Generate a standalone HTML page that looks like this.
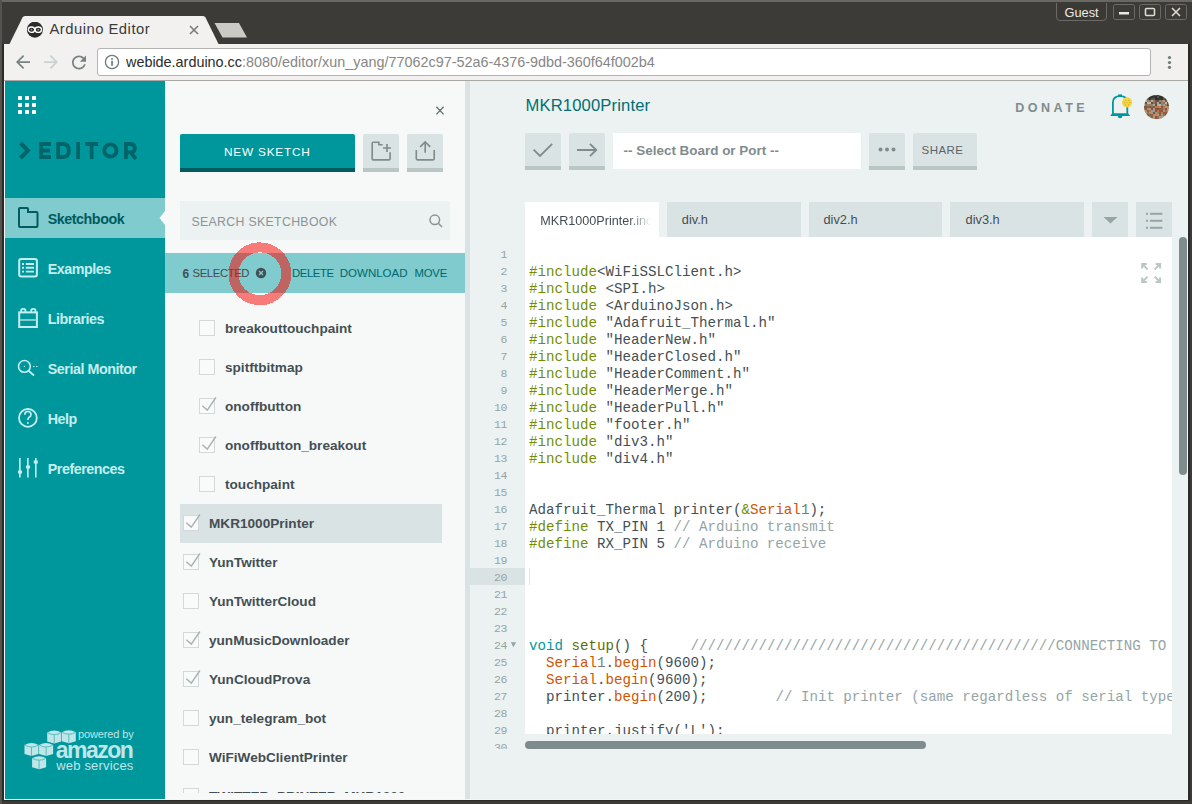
<!DOCTYPE html>
<html><head><meta charset="utf-8">
<style>
*{margin:0;padding:0;box-sizing:border-box}
html,body{width:1192px;height:804px;overflow:hidden;background:#3c3b37;font-family:"Liberation Sans",sans-serif}
.a{position:absolute}
.t{position:absolute;line-height:1;white-space:nowrap}
.code{position:absolute;left:4px;height:17px;line-height:17px;font-family:"Liberation Mono",monospace;font-size:14.17px;white-space:pre;color:#434f54}
.ln{position:absolute;right:18px;height:17px;line-height:17px;font-family:"Liberation Mono",monospace;font-size:11.5px;color:#95a5a6;text-align:right;letter-spacing:-0.4px}
</style></head><body>
<div class="a" style="left:0px;top:0px;width:1192px;height:804px;background:#3c3b37;"></div>
<div class="a" style="left:0px;top:0px;width:1192px;height:2px;background:#696864;"></div>
<div class="a" style="left:0px;top:0px;width:2px;height:804px;background:#55534f;"></div>
<div class="a" style="left:2px;top:44px;width:2px;height:757px;background:#2b2a27;"></div>
<div class="a" style="left:1188px;top:44px;width:1.5px;height:757px;background:#2b2a27;"></div>
<div class="a" style="left:4px;top:800px;width:1185px;height:1px;background:#2b2a27;"></div>
<svg class="a" style="left:0;top:0" width="260" height="45">
<path d="M9,45 L22.5,17.5 Q23.3,16 25,16 L203,16 Q204.7,16 205.5,17.5 L219,45 Z" fill="#f2f1f0"/>
<path d="M214.5,23 L239,23 L247,37.5 L222.5,37.5 Z" fill="#cbcac6"/>
</svg>
<svg class="a" style="left:27px;top:22px" width="16" height="16" viewBox="0 0 16 16">
<circle cx="7.9" cy="7.7" r="8" fill="#2b2b2a"/>
<ellipse cx="4.5" cy="7.7" rx="3.2" ry="2.7" fill="none" stroke="#fff" stroke-width="1.3"/>
<ellipse cx="11.3" cy="7.7" rx="3.2" ry="2.7" fill="none" stroke="#fff" stroke-width="1.3"/>
<circle cx="4.5" cy="7.7" r="0.9" fill="#8a9a9a"/><circle cx="11.3" cy="7.7" r="0.9" fill="#8a9a9a"/>
</svg>
<div class="t" style="left:49.4px;top:22.27px;font-size:14.8px;color:#3b3b3b;font-weight:normal;letter-spacing:0.5px;font-family:'Liberation Sans',sans-serif;">Arduino Editor</div>
<svg class="a" style="left:189px;top:25px" width="10" height="10"><path d="M1,1 L9,9 M9,1 L1,9" stroke="#7a7a78" stroke-width="1.6"/></svg>
<svg class="a" style="left:1050px;top:0" width="142" height="24">
<path d="M6.5,3 L6.5,17 Q6.5,20.5 10,20.5 L53,20.5 Q56.5,20.5 56.5,17 L56.5,3" fill="#3a3935" stroke="#6b6a66" stroke-width="1"/>
<rect x="63.5" y="4.5" width="21" height="15" rx="2" fill="none" stroke="#6b6a66"/>
<rect x="89.5" y="4.5" width="21" height="15" rx="2" fill="none" stroke="#6b6a66"/>
<rect x="115.5" y="4.5" width="21" height="15" rx="2" fill="none" stroke="#6b6a66"/>
<rect x="69" y="12" width="10" height="2.5" fill="#e8e8e6"/>
<rect x="95.5" y="8.5" width="9" height="7" rx="1" fill="none" stroke="#dfdbd2" stroke-width="1.6"/>
<path d="M122,8 L130,16 M130,8 L122,16" stroke="#dfdbd2" stroke-width="1.6"/>
</svg>
<div class="t" style="left:1064.5px;top:6.66px;font-size:12.8px;color:#ecebe8;font-weight:normal;letter-spacing:0px;font-family:'Liberation Sans',sans-serif;">Guest</div>
<div class="a" style="left:4px;top:44px;width:1184px;height:37px;background:#f2f1f0;"></div>
<div class="a" style="left:4px;top:80px;width:1184px;height:1px;background:#a9a8a5;"></div>
<svg class="a" style="left:0;top:44px" width="100" height="36">
<g transform="translate(12.5,7.5) scale(0.875)"><path d="M20 11H7.83l5.59-5.59L12 4l-8 8 8 8 1.41-1.41L7.83 13H20v-2z" fill="#778383"/></g>
<g transform="translate(40.5,7.5) scale(0.875)"><path d="M4 11h12.17l-5.59-5.59L12 4l8 8-8 8-1.41-1.41L16.17 13H4v-2z" fill="#c9d1d1"/></g>
<g transform="translate(68.5,8) scale(0.875)"><path d="M17.65 6.35C16.2 4.9 14.21 4 12 4c-4.42 0-7.99 3.58-7.99 8s3.57 8 7.99 8c3.73 0 6.84-2.55 7.73-6h-2.08c-.82 2.33-3.04 4-5.65 4-3.31 0-6-2.69-6-6s2.69-6 6-6c1.66 0 3.14.69 4.22 1.78L13 11h7V4l-2.35 2.35z" fill="#778383"/></g>
</svg>
<div class="a" style="left:97px;top:48px;width:1054px;height:28px;background:#fff;border:1px solid #b3b3b1;border-radius:3px"></div>
<svg class="a" style="left:104px;top:54px" width="16" height="16"><circle cx="8" cy="8" r="6.6" fill="none" stroke="#6f7a7a" stroke-width="1.3"/><rect x="7.2" y="6.8" width="1.7" height="5" fill="#6f7a7a"/><rect x="7.2" y="4" width="1.7" height="1.7" fill="#6f7a7a"/></svg>
<div class="t" style="left:126.0px;top:55.01px;font-size:14.4px;color:#868686;font-weight:normal;letter-spacing:0px;font-family:'Liberation Sans',sans-serif;"><span style="color:#2b2b2b">webide.arduino.cc</span>:8080/editor/xun_yang/77062c97-52a6-4376-9dbd-360f64f002b4</div>
<svg class="a" style="left:1166px;top:55px" width="8" height="16"><circle cx="3.5" cy="2.5" r="1.6" fill="#6f7a7a"/><circle cx="3.5" cy="7.5" r="1.6" fill="#6f7a7a"/><circle cx="3.5" cy="12.3" r="1.6" fill="#6f7a7a"/></svg>
<div class="a" style="left:4px;top:81px;width:1184px;height:719px;background:#f4f5f5;"></div>
<div class="a" style="left:5px;top:81px;width:1182px;height:718px;background:#ecf1f1;"></div>
<div class="a" style="left:5px;top:81px;width:160px;height:718px;background:#00979c;"></div>
<svg class="a" style="left:18px;top:96px" width="18" height="18"><rect x="0" y="0" width="4" height="4" rx="0.8" fill="#fff"/><rect x="0" y="7" width="4" height="4" rx="0.8" fill="#fff"/><rect x="0" y="14" width="4" height="4" rx="0.8" fill="#fff"/><rect x="7" y="0" width="4" height="4" rx="0.8" fill="#fff"/><rect x="7" y="7" width="4" height="4" rx="0.8" fill="#fff"/><rect x="7" y="14" width="4" height="4" rx="0.8" fill="#fff"/><rect x="14" y="0" width="4" height="4" rx="0.8" fill="#fff"/><rect x="14" y="7" width="4" height="4" rx="0.8" fill="#fff"/><rect x="14" y="14" width="4" height="4" rx="0.8" fill="#fff"/></svg>
<svg class="a" style="left:15px;top:138px" width="130" height="25" fill="none" stroke="#006468" stroke-width="3.8">
<path d="M5.5,5 L12.8,12.5 L5.5,20" stroke-width="4"/>
<path d="M35.9,6 L26.1,6 L26.1,19 L35.9,19 M26.1,12.5 L35,12.5"/>
<path d="M43.2,6 L48,6 Q53.8,6 53.8,12.5 Q53.8,19 48,19 L43.2,19 Z"/>
<path d="M63.1,4 L63.1,21"/>
<path d="M70.2,6 L83.1,6 M76.65,6 L76.65,21"/>
<circle cx="95.4" cy="12.5" r="6.2"/>
<path d="M110.9,21 L110.9,6 L115.5,6 Q119.8,6 119.8,10.2 Q119.8,14.4 115.5,14.4 L110.9,14.4 M115.5,14.4 L121,21"/>
</svg>
<div class="a" style="left:5px;top:198px;width:160px;height:40px;background:#7fcbcd;"></div>
<svg class="a" style="left:159px;top:211px" width="6" height="14"><path d="M6,0 L0.5,7 L6,14 Z" fill="#f7f9f9"/></svg>
<svg class="a" style="left:15px;top:200px" width="30" height="290" fill="none" stroke-width="2">
<path d="M4,9 L4,26 Q4,27 5,27 L21.5,27 Q22.5,27 22.5,26 L22.5,13 Q22.5,12 21.5,12 L13,12 L13,9 Q13,8 12,8 L5,8 Q4,8 4,9 Z" stroke="#005c5f"/>
<rect x="4.2" y="58.9" width="17.7" height="17.6" rx="2" stroke="#c5eeef"/>
<path d="M7,64 L9,64 M7,67.8 L9,67.8 M7,71.6 L9,71.6 M10.8,64 L19,64 M10.8,67.8 L19,67.8 M10.8,71.6 L19,71.6" stroke="#c5eeef" stroke-width="1.9"/>
<rect x="4.2" y="112.4" width="17.7" height="14.6" stroke="#c5eeef"/>
<path d="M6.2,112.4 L6.2,110.4 Q6.2,108.9 8.3,108.9 Q10.4,108.9 10.4,110.4 L10.4,112.4 M16.2,112.4 L16.2,110.4 Q16.2,108.9 18.3,108.9 Q20.4,108.9 20.4,110.4 L20.4,112.4" stroke="#c5eeef" stroke-width="1.8"/>
<path d="M5,120 L21.5,120" stroke="#8fd3d4" stroke-width="1.8"/>
<circle cx="9.4" cy="166.4" r="5.9" stroke="#c5eeef" stroke-width="1.6"/>
<path d="M13.6,170.8 L19,175.5" stroke="#c5eeef" stroke-width="1.8"/>
<circle cx="9.4" cy="166.4" r="0.6" fill="#c5eeef" stroke="none"/>
<path d="M18,166.5 L19.5,166.5 M21,166.5 L22.5,166.5" stroke="#c5eeef" stroke-width="1.2"/>
<circle cx="12.9" cy="217.9" r="8.9" stroke="#c5eeef" stroke-width="1.8"/>
<path d="M9.8,214.8 Q9.8,211.5 12.9,211.5 Q16,211.5 16,214.5 Q16,216.5 13.8,217.6 Q12.9,218.2 12.9,220" stroke="#c5eeef" stroke-width="1.7"/>
<circle cx="12.9" cy="223" r="1" fill="#c5eeef" stroke="none"/>
<path d="M4.9,258 L4.9,277.5 M12.9,258 L12.9,277.5 M20.8,258 L20.8,277.5" stroke="#c5eeef" stroke-width="1.6"/>
<rect x="3" y="270.5" width="4" height="3" fill="#c5eeef" stroke="none"/>
<rect x="11" y="265.5" width="4" height="3" fill="#c5eeef" stroke="none"/>
<rect x="18.8" y="260.5" width="4" height="3" fill="#c5eeef" stroke="none"/>
</svg>
<div class="t" style="left:47.7px;top:211.90px;font-size:14.3px;color:#005c5f;font-weight:bold;letter-spacing:-0.45px;font-family:'Liberation Sans',sans-serif;">Sketchbook</div>
<div class="t" style="left:47.7px;top:261.90px;font-size:14.3px;color:#c5eeef;font-weight:bold;letter-spacing:-0.45px;font-family:'Liberation Sans',sans-serif;">Examples</div>
<div class="t" style="left:47.7px;top:311.90px;font-size:14.3px;color:#c5eeef;font-weight:bold;letter-spacing:-0.45px;font-family:'Liberation Sans',sans-serif;">Libraries</div>
<div class="t" style="left:47.7px;top:361.90px;font-size:14.3px;color:#c5eeef;font-weight:bold;letter-spacing:-0.45px;font-family:'Liberation Sans',sans-serif;">Serial Monitor</div>
<div class="t" style="left:47.7px;top:411.90px;font-size:14.3px;color:#c5eeef;font-weight:bold;letter-spacing:-0.45px;font-family:'Liberation Sans',sans-serif;">Help</div>
<div class="t" style="left:47.7px;top:461.90px;font-size:14.3px;color:#c5eeef;font-weight:bold;letter-spacing:-0.45px;font-family:'Liberation Sans',sans-serif;">Preferences</div>
<svg class="a" style="left:0;top:700px" width="160" height="100"><path d="M47.2,32.6 Q54.2,28.6 61.2,32.6 L61.2,41.6 L54.2,43.6 L47.2,41.6 Z" fill="#bfe6e8"/><path d="M47.7,32.800000000000004 Q50.2,34.6 54.2,34.6 Q58.2,34.6 60.7,32.800000000000004 M54.2,34.6 L54.2,43.6" fill="none" stroke="#5bbcc0" stroke-width="1"/><path d="M61.8,32.2 Q68.8,28.2 75.8,32.2 L75.8,41.2 L68.8,43.2 L61.8,41.2 Z" fill="#bfe6e8"/><path d="M62.3,32.4 Q64.8,34.2 68.8,34.2 Q72.8,34.2 75.3,32.4 M68.8,34.2 L68.8,43.2" fill="none" stroke="#5bbcc0" stroke-width="1"/><path d="M24.5,45 Q31.5,41 38.5,45 L38.5,54 L31.5,56 L24.5,54 Z" fill="#bfe6e8"/><path d="M25.0,45.2 Q27.5,47 31.5,47 Q35.5,47 38.0,45.2 M31.5,47 L31.5,56" fill="none" stroke="#5bbcc0" stroke-width="1"/><path d="M39.1,45 Q46.1,41 53.1,45 L53.1,54 L46.1,56 L39.1,54 Z" fill="#bfe6e8"/><path d="M39.6,45.2 Q42.1,47 46.1,47 Q50.1,47 52.6,45.2 M46.1,47 L46.1,56" fill="none" stroke="#5bbcc0" stroke-width="1"/><path d="M32.1,58.2 Q39.1,54.2 46.1,58.2 L46.1,67.2 L39.1,69.2 L32.1,67.2 Z" fill="#bfe6e8"/><path d="M32.6,58.400000000000006 Q35.1,60.2 39.1,60.2 Q43.1,60.2 45.6,58.400000000000006 M39.1,60.2 L39.1,69.2" fill="none" stroke="#5bbcc0" stroke-width="1"/></svg>
<div class="t" style="left:77.9px;top:729.29px;font-size:11px;color:#bfe6e8;font-weight:normal;letter-spacing:-0.11px;font-family:'Liberation Sans',sans-serif;">powered by</div>
<div class="t" style="left:55.8px;top:739.33px;font-size:23px;color:#bfe6e8;font-weight:bold;letter-spacing:-1.53px;font-family:'Liberation Sans',sans-serif;">amazon</div>
<div class="t" style="left:56.3px;top:758.80px;font-size:13px;color:#bfe6e8;font-weight:normal;letter-spacing:0.17px;font-family:'Liberation Sans',sans-serif;">web services</div>
<div class="a" style="left:165px;top:81px;width:300px;height:718px;background:#f7f9f9;"></div>
<div class="a" style="left:465px;top:81px;width:5px;height:718px;background:#dae3e3;"></div>
<svg class="a" style="left:434px;top:105px" width="12" height="12"><path d="M2.4,1.8 L9.6,9.4 M9.6,1.8 L2.4,9.4" stroke="#5c6b6b" stroke-width="1.25"/></svg>
<div class="a" style="left:180px;top:134px;width:175px;height:38px;background:#00979c;border-bottom:4px solid #005c5f;border-radius:2px 2px 0 0"></div>
<div class="t" style="left:224.0px;top:146.51px;font-size:11.8px;color:#fff;font-weight:normal;letter-spacing:0.8px;font-family:'Liberation Sans',sans-serif;">NEW SKETCH</div>
<div class="a" style="left:363px;top:134px;width:36px;height:38px;background:#dae3e3;border-bottom:4px solid #bac6c3;border-radius:2px 2px 0 0"></div>
<div class="a" style="left:407px;top:134px;width:36px;height:38px;background:#dae3e3;border-bottom:4px solid #bac6c3;border-radius:2px 2px 0 0"></div>
<svg class="a" style="left:363px;top:134px" width="80" height="34" fill="none" stroke="#7f8c8d" stroke-width="2">
<path d="M9.2,25.8 L9.2,9.2 Q9.2,8.2 10.2,8.2 L15.9,8.2 L15.9,10.7 L19.7,10.7" stroke-width="1.65"/>
<path d="M27.1,18.3 L27.1,24.8 Q27.1,25.8 26.1,25.8 L9.2,25.8" stroke-width="1.65"/>
<path d="M20,14 L28,14 M24,10 L24,18" stroke-width="1.65"/>
<path d="M53.3,16 L53.3,24.8 Q53.3,25.8 54.3,25.8 L70.2,25.8 Q71.2,25.8 71.2,24.8 L71.2,16" stroke-width="1.65"/>
<path d="M62.2,18.7 L62.2,8 M57.2,12.8 L62.2,7.8 L67.2,12.8" stroke-width="1.65"/>
</svg>
<div class="a" style="left:180px;top:201px;width:270px;height:39px;background:#ecf1f1;"></div>
<div class="t" style="left:191.4px;top:215.89px;font-size:12.3px;color:#8a9496;font-weight:normal;letter-spacing:0.34px;font-family:'Liberation Sans',sans-serif;">SEARCH SKETCHBOOK</div>
<svg class="a" style="left:428px;top:213px" width="16" height="16" fill="none" stroke="#8a9496" stroke-width="1.5"><circle cx="6.8" cy="6.8" r="4.8"/><path d="M10.3,10.3 L14,14"/></svg>
<div class="a" style="left:165px;top:253px;width:300px;height:40px;background:#7fcbcd;"></div>
<div class="t" style="left:182.4px;top:267.84px;font-size:12px;color:#434f54;font-weight:bold;letter-spacing:0px;font-family:'Liberation Sans',sans-serif;">6</div>
<div class="t" style="left:192.6px;top:268.43px;font-size:11.3px;color:#434f54;font-weight:normal;letter-spacing:-0.4px;font-family:'Liberation Sans',sans-serif;">SELECTED</div>
<svg class="a" style="left:255px;top:267px" width="12" height="12"><circle cx="6" cy="6" r="5.2" fill="#434f54"/><path d="M4,4 L8,8 M8,4 L4,8" stroke="#7fcbcd" stroke-width="1.3"/></svg>
<div class="t" style="left:292.0px;top:268.43px;font-size:11.3px;color:#00686c;font-weight:normal;letter-spacing:-0.4px;font-family:'Liberation Sans',sans-serif;">DELETE</div>
<div class="t" style="left:339.8px;top:268.27px;font-size:11.5px;color:#00686c;font-weight:normal;letter-spacing:0px;font-family:'Liberation Sans',sans-serif;">DOWNLOAD</div>
<div class="t" style="left:414.5px;top:268.43px;font-size:11.3px;color:#00686c;font-weight:normal;letter-spacing:-0.2px;font-family:'Liberation Sans',sans-serif;">MOVE</div>
<div class="a" style="left:165px;top:300px;width:300px;height:493px;overflow:hidden">
<div class="a" style="left:15px;top:204px;width:262px;height:39px;background:#dae3e3;"></div>
<div class="a" style="left:34.3px;top:20.2px;width:15.5px;height:15.5px;border:1.3px solid #d3d9d9;background:#f9fbfb"></div>
<div class="t" style="left:60.0px;top:21.99px;font-size:13.6px;color:#434f54;font-weight:bold;letter-spacing:0px;font-family:'Liberation Sans',sans-serif;">breakouttouchpaint</div>
<div class="a" style="left:34.3px;top:59.2px;width:15.5px;height:15.5px;border:1.3px solid #d3d9d9;background:#f9fbfb"></div>
<div class="t" style="left:60.0px;top:60.99px;font-size:13.6px;color:#434f54;font-weight:bold;letter-spacing:0px;font-family:'Liberation Sans',sans-serif;">spitftbitmap</div>
<div class="a" style="left:34.3px;top:98.2px;width:15.5px;height:15.5px;border:1.3px solid #d3d9d9;background:#f9fbfb"></div>
<svg class="a" style="left:35px;top:94px" width="18" height="20"><path d="M2.3,11.7 L7.3,16.1 L15.9,3.5" fill="none" stroke="#a9b3b3" stroke-width="1.4"/></svg>
<div class="t" style="left:60.0px;top:99.99px;font-size:13.6px;color:#434f54;font-weight:bold;letter-spacing:0px;font-family:'Liberation Sans',sans-serif;">onoffbutton</div>
<div class="a" style="left:34.3px;top:137.2px;width:15.5px;height:15.5px;border:1.3px solid #d3d9d9;background:#f9fbfb"></div>
<svg class="a" style="left:35px;top:133px" width="18" height="20"><path d="M2.3,11.7 L7.3,16.1 L15.9,3.5" fill="none" stroke="#a9b3b3" stroke-width="1.4"/></svg>
<div class="t" style="left:60.0px;top:138.99px;font-size:13.6px;color:#434f54;font-weight:bold;letter-spacing:0px;font-family:'Liberation Sans',sans-serif;">onoffbutton_breakout</div>
<div class="a" style="left:34.3px;top:176.2px;width:15.5px;height:15.5px;border:1.3px solid #d3d9d9;background:#f9fbfb"></div>
<div class="t" style="left:60.0px;top:177.99px;font-size:13.6px;color:#434f54;font-weight:bold;letter-spacing:0px;font-family:'Liberation Sans',sans-serif;">touchpaint</div>
<div class="a" style="left:18.3px;top:215.2px;width:15.5px;height:15.5px;border:1.3px solid #d3d9d9;background:#f9fbfb"></div>
<svg class="a" style="left:19px;top:211px" width="18" height="20"><path d="M2.3,11.7 L7.3,16.1 L15.9,3.5" fill="none" stroke="#a9b3b3" stroke-width="1.4"/></svg>
<div class="t" style="left:44.0px;top:216.99px;font-size:13.6px;color:#434f54;font-weight:bold;letter-spacing:0px;font-family:'Liberation Sans',sans-serif;">MKR1000Printer</div>
<div class="a" style="left:18.3px;top:254.2px;width:15.5px;height:15.5px;border:1.3px solid #d3d9d9;background:#f9fbfb"></div>
<svg class="a" style="left:19px;top:250px" width="18" height="20"><path d="M2.3,11.7 L7.3,16.1 L15.9,3.5" fill="none" stroke="#a9b3b3" stroke-width="1.4"/></svg>
<div class="t" style="left:44.0px;top:255.99px;font-size:13.6px;color:#434f54;font-weight:bold;letter-spacing:0px;font-family:'Liberation Sans',sans-serif;">YunTwitter</div>
<div class="a" style="left:18.3px;top:293.2px;width:15.5px;height:15.5px;border:1.3px solid #d3d9d9;background:#f9fbfb"></div>
<div class="t" style="left:44.0px;top:294.99px;font-size:13.6px;color:#434f54;font-weight:bold;letter-spacing:0px;font-family:'Liberation Sans',sans-serif;">YunTwitterCloud</div>
<div class="a" style="left:18.3px;top:332.2px;width:15.5px;height:15.5px;border:1.3px solid #d3d9d9;background:#f9fbfb"></div>
<svg class="a" style="left:19px;top:328px" width="18" height="20"><path d="M2.3,11.7 L7.3,16.1 L15.9,3.5" fill="none" stroke="#a9b3b3" stroke-width="1.4"/></svg>
<div class="t" style="left:44.0px;top:333.99px;font-size:13.6px;color:#434f54;font-weight:bold;letter-spacing:0px;font-family:'Liberation Sans',sans-serif;">yunMusicDownloader</div>
<div class="a" style="left:18.3px;top:371.2px;width:15.5px;height:15.5px;border:1.3px solid #d3d9d9;background:#f9fbfb"></div>
<svg class="a" style="left:19px;top:367px" width="18" height="20"><path d="M2.3,11.7 L7.3,16.1 L15.9,3.5" fill="none" stroke="#a9b3b3" stroke-width="1.4"/></svg>
<div class="t" style="left:44.0px;top:372.99px;font-size:13.6px;color:#434f54;font-weight:bold;letter-spacing:0px;font-family:'Liberation Sans',sans-serif;">YunCloudProva</div>
<div class="a" style="left:18.3px;top:410.2px;width:15.5px;height:15.5px;border:1.3px solid #d3d9d9;background:#f9fbfb"></div>
<div class="t" style="left:44.0px;top:411.99px;font-size:13.6px;color:#434f54;font-weight:bold;letter-spacing:0px;font-family:'Liberation Sans',sans-serif;">yun_telegram_bot</div>
<div class="a" style="left:18.3px;top:449.2px;width:15.5px;height:15.5px;border:1.3px solid #d3d9d9;background:#f9fbfb"></div>
<div class="t" style="left:44.0px;top:450.99px;font-size:13.6px;color:#434f54;font-weight:bold;letter-spacing:0px;font-family:'Liberation Sans',sans-serif;">WiFiWebClientPrinter</div>
<div class="a" style="left:18.3px;top:488.2px;width:15.5px;height:15.5px;border:1.3px solid #d3d9d9;background:#f9fbfb"></div>
<div class="t" style="left:44.0px;top:489.99px;font-size:13.6px;color:#434f54;font-weight:bold;letter-spacing:0px;font-family:'Liberation Sans',sans-serif;">TWITTER_PRINTER_MKR1000</div>
</div>
<svg class="a" style="left:220px;top:234px" width="80" height="80"><circle cx="39.9" cy="39.8" r="26.4" fill="none" stroke="rgba(248,8,4,0.52)" stroke-width="10" shape-rendering="crispEdges"/></svg>
<div class="t" style="left:525.5px;top:98.15px;font-size:16.6px;color:#006f72;font-weight:normal;letter-spacing:0.15px;font-family:'Liberation Sans',sans-serif;">MKR1000Printer</div>
<div class="t" style="left:1015.3px;top:102.02px;font-size:12.5px;color:#7f8c8d;font-weight:bold;letter-spacing:3.49px;font-family:'Liberation Sans',sans-serif;">DONATE</div>
<svg class="a" style="left:1106px;top:88px" width="30" height="32">
<path d="M6.9,25.8 L6.9,14.5 Q6.9,8.1 14.1,8.1 Q21.3,8.1 21.3,14.5 L21.3,25.8" fill="none" stroke="#00979c" stroke-width="1.8"/>
<rect x="12.2" y="6.4" width="3.8" height="2.4" fill="#00979c"/>
<path d="M4.2,28.1 L6.2,25.2 L22,25.2 L24.2,28.1 Z" fill="#00979c"/>
<path d="M11.8,28 A2.3,2.3 0 0,0 16.4,28 Z" fill="#00979c"/>
<circle cx="21.1" cy="14.3" r="5.1" fill="#f5d442"/>
<g fill="#c9a92a"><circle cx="19.6" cy="12.3" r="0.6"/><circle cx="22.6" cy="12.3" r="0.6"/><circle cx="18.4" cy="14.6" r="0.6"/><circle cx="21.1" cy="14.6" r="0.6"/><circle cx="23.8" cy="14.6" r="0.6"/><circle cx="19.6" cy="16.8" r="0.6"/><circle cx="22.6" cy="16.8" r="0.6"/></g>
</svg>
<div class="a" style="left:1144px;top:94.7px;width:24.8px;height:24.8px;border-radius:50%;overflow:hidden"><svg style="position:absolute;left:-1px;top:-1px" width="27" height="27"><rect x="0" y="0" width="2" height="2" fill="#4a4642"/><rect x="2" y="0" width="2" height="2" fill="#3a3835"/><rect x="4" y="0" width="2" height="2" fill="#2f2e2c"/><rect x="6" y="0" width="2" height="2" fill="#8a8478"/><rect x="8" y="0" width="2" height="2" fill="#2f2e2c"/><rect x="10" y="0" width="2" height="2" fill="#2f2e2c"/><rect x="12" y="0" width="2" height="2" fill="#5a5650"/><rect x="14" y="0" width="2" height="2" fill="#2f2e2c"/><rect x="16" y="0" width="2" height="2" fill="#4a4642"/><rect x="18" y="0" width="2" height="2" fill="#5a5650"/><rect x="20" y="0" width="2" height="2" fill="#2f2e2c"/><rect x="22" y="0" width="2" height="2" fill="#5a5650"/><rect x="24" y="0" width="2" height="2" fill="#3a3835"/><rect x="0" y="2" width="2" height="2" fill="#2f2e2c"/><rect x="2" y="2" width="2" height="2" fill="#2f2e2c"/><rect x="4" y="2" width="2" height="2" fill="#2f2e2c"/><rect x="6" y="2" width="2" height="2" fill="#2f2e2c"/><rect x="8" y="2" width="2" height="2" fill="#2f2e2c"/><rect x="10" y="2" width="2" height="2" fill="#3a3835"/><rect x="12" y="2" width="2" height="2" fill="#2f2e2c"/><rect x="14" y="2" width="2" height="2" fill="#5a5650"/><rect x="16" y="2" width="2" height="2" fill="#2f2e2c"/><rect x="18" y="2" width="2" height="2" fill="#2f2e2c"/><rect x="20" y="2" width="2" height="2" fill="#5a5650"/><rect x="22" y="2" width="2" height="2" fill="#2f2e2c"/><rect x="24" y="2" width="2" height="2" fill="#3a3835"/><rect x="0" y="4" width="2" height="2" fill="#8a8478"/><rect x="2" y="4" width="2" height="2" fill="#8a8478"/><rect x="4" y="4" width="2" height="2" fill="#5a5650"/><rect x="6" y="4" width="2" height="2" fill="#2f2e2c"/><rect x="8" y="4" width="2" height="2" fill="#5a5650"/><rect x="10" y="4" width="2" height="2" fill="#5a5650"/><rect x="12" y="4" width="2" height="2" fill="#2f2e2c"/><rect x="14" y="4" width="2" height="2" fill="#2f2e2c"/><rect x="16" y="4" width="2" height="2" fill="#3a3835"/><rect x="18" y="4" width="2" height="2" fill="#2f2e2c"/><rect x="20" y="4" width="2" height="2" fill="#5a5650"/><rect x="22" y="4" width="2" height="2" fill="#3a3835"/><rect x="24" y="4" width="2" height="2" fill="#4a4642"/><rect x="0" y="6" width="2" height="2" fill="#8a8478"/><rect x="2" y="6" width="2" height="2" fill="#b0a898"/><rect x="4" y="6" width="2" height="2" fill="#8f8468"/><rect x="6" y="6" width="2" height="2" fill="#9a7050"/><rect x="8" y="6" width="2" height="2" fill="#b0a898"/><rect x="10" y="6" width="2" height="2" fill="#8f8468"/><rect x="12" y="6" width="2" height="2" fill="#6e5a48"/><rect x="14" y="6" width="2" height="2" fill="#5a5248"/><rect x="16" y="6" width="2" height="2" fill="#8f8468"/><rect x="18" y="6" width="2" height="2" fill="#8f8468"/><rect x="20" y="6" width="2" height="2" fill="#a89a88"/><rect x="22" y="6" width="2" height="2" fill="#6e5a48"/><rect x="24" y="6" width="2" height="2" fill="#c0b8a8"/><rect x="0" y="8" width="2" height="2" fill="#8a8478"/><rect x="2" y="8" width="2" height="2" fill="#5a5248"/><rect x="4" y="8" width="2" height="2" fill="#c0b8a8"/><rect x="6" y="8" width="2" height="2" fill="#c0b8a8"/><rect x="8" y="8" width="2" height="2" fill="#5a5248"/><rect x="10" y="8" width="2" height="2" fill="#9a7050"/><rect x="12" y="8" width="2" height="2" fill="#6e5a48"/><rect x="14" y="8" width="2" height="2" fill="#b0a898"/><rect x="16" y="8" width="2" height="2" fill="#6e5a48"/><rect x="18" y="8" width="2" height="2" fill="#8f8468"/><rect x="20" y="8" width="2" height="2" fill="#9a7050"/><rect x="22" y="8" width="2" height="2" fill="#c0b8a8"/><rect x="24" y="8" width="2" height="2" fill="#5a5248"/><rect x="0" y="10" width="2" height="2" fill="#c0b8a8"/><rect x="2" y="10" width="2" height="2" fill="#9a7050"/><rect x="4" y="10" width="2" height="2" fill="#8f8468"/><rect x="6" y="10" width="2" height="2" fill="#8f8468"/><rect x="8" y="10" width="2" height="2" fill="#8a8478"/><rect x="10" y="10" width="2" height="2" fill="#b0a898"/><rect x="12" y="10" width="2" height="2" fill="#5a5248"/><rect x="14" y="10" width="2" height="2" fill="#b0a898"/><rect x="16" y="10" width="2" height="2" fill="#c0b8a8"/><rect x="18" y="10" width="2" height="2" fill="#8a8478"/><rect x="20" y="10" width="2" height="2" fill="#a89a88"/><rect x="22" y="10" width="2" height="2" fill="#8f8468"/><rect x="24" y="10" width="2" height="2" fill="#5a5248"/><rect x="0" y="12" width="2" height="2" fill="#6e5a48"/><rect x="2" y="12" width="2" height="2" fill="#6e5a48"/><rect x="4" y="12" width="2" height="2" fill="#7a6a58"/><rect x="6" y="12" width="2" height="2" fill="#a04a38"/><rect x="8" y="12" width="2" height="2" fill="#7a6a58"/><rect x="10" y="12" width="2" height="2" fill="#a04a38"/><rect x="12" y="12" width="2" height="2" fill="#b87a45"/><rect x="14" y="12" width="2" height="2" fill="#b87a45"/><rect x="16" y="12" width="2" height="2" fill="#c08a55"/><rect x="18" y="12" width="2" height="2" fill="#a04a38"/><rect x="20" y="12" width="2" height="2" fill="#b87a45"/><rect x="22" y="12" width="2" height="2" fill="#a89a88"/><rect x="24" y="12" width="2" height="2" fill="#c08a55"/><rect x="0" y="14" width="2" height="2" fill="#7a6a58"/><rect x="2" y="14" width="2" height="2" fill="#a04a38"/><rect x="4" y="14" width="2" height="2" fill="#c08a55"/><rect x="6" y="14" width="2" height="2" fill="#a09888"/><rect x="8" y="14" width="2" height="2" fill="#6e5a48"/><rect x="10" y="14" width="2" height="2" fill="#a89a88"/><rect x="12" y="14" width="2" height="2" fill="#a04a38"/><rect x="14" y="14" width="2" height="2" fill="#6e5a48"/><rect x="16" y="14" width="2" height="2" fill="#9a5a3e"/><rect x="18" y="14" width="2" height="2" fill="#7a6a58"/><rect x="20" y="14" width="2" height="2" fill="#b87a45"/><rect x="22" y="14" width="2" height="2" fill="#a04a38"/><rect x="24" y="14" width="2" height="2" fill="#a89a88"/><rect x="0" y="16" width="2" height="2" fill="#8f8468"/><rect x="2" y="16" width="2" height="2" fill="#c08a55"/><rect x="4" y="16" width="2" height="2" fill="#9a5a3e"/><rect x="6" y="16" width="2" height="2" fill="#8f8468"/><rect x="8" y="16" width="2" height="2" fill="#a09888"/><rect x="10" y="16" width="2" height="2" fill="#a09888"/><rect x="12" y="16" width="2" height="2" fill="#a04a38"/><rect x="14" y="16" width="2" height="2" fill="#b87a45"/><rect x="16" y="16" width="2" height="2" fill="#9a5a3e"/><rect x="18" y="16" width="2" height="2" fill="#a04a38"/><rect x="20" y="16" width="2" height="2" fill="#a09888"/><rect x="22" y="16" width="2" height="2" fill="#8a7a5a"/><rect x="24" y="16" width="2" height="2" fill="#c08a55"/><rect x="0" y="18" width="2" height="2" fill="#9a5a3e"/><rect x="2" y="18" width="2" height="2" fill="#a09888"/><rect x="4" y="18" width="2" height="2" fill="#8a7a5a"/><rect x="6" y="18" width="2" height="2" fill="#c08a55"/><rect x="8" y="18" width="2" height="2" fill="#a09888"/><rect x="10" y="18" width="2" height="2" fill="#6e5a48"/><rect x="12" y="18" width="2" height="2" fill="#a09888"/><rect x="14" y="18" width="2" height="2" fill="#8f8468"/><rect x="16" y="18" width="2" height="2" fill="#9a5a3e"/><rect x="18" y="18" width="2" height="2" fill="#b87a45"/><rect x="20" y="18" width="2" height="2" fill="#9a5a3e"/><rect x="22" y="18" width="2" height="2" fill="#9a5a3e"/><rect x="24" y="18" width="2" height="2" fill="#8f8468"/><rect x="0" y="20" width="2" height="2" fill="#8f8468"/><rect x="2" y="20" width="2" height="2" fill="#a89a88"/><rect x="4" y="20" width="2" height="2" fill="#a04a38"/><rect x="6" y="20" width="2" height="2" fill="#7a6a58"/><rect x="8" y="20" width="2" height="2" fill="#9a5a3e"/><rect x="10" y="20" width="2" height="2" fill="#c08a55"/><rect x="12" y="20" width="2" height="2" fill="#c08a55"/><rect x="14" y="20" width="2" height="2" fill="#a89a88"/><rect x="16" y="20" width="2" height="2" fill="#9a5a3e"/><rect x="18" y="20" width="2" height="2" fill="#a09888"/><rect x="20" y="20" width="2" height="2" fill="#8a7a5a"/><rect x="22" y="20" width="2" height="2" fill="#6e5a48"/><rect x="24" y="20" width="2" height="2" fill="#7a6a58"/><rect x="0" y="22" width="2" height="2" fill="#7a6a58"/><rect x="2" y="22" width="2" height="2" fill="#6e5a48"/><rect x="4" y="22" width="2" height="2" fill="#9a5a3e"/><rect x="6" y="22" width="2" height="2" fill="#8a7a5a"/><rect x="8" y="22" width="2" height="2" fill="#7a6a58"/><rect x="10" y="22" width="2" height="2" fill="#a89a88"/><rect x="12" y="22" width="2" height="2" fill="#a04a38"/><rect x="14" y="22" width="2" height="2" fill="#8a7a5a"/><rect x="16" y="22" width="2" height="2" fill="#a09888"/><rect x="18" y="22" width="2" height="2" fill="#a09888"/><rect x="20" y="22" width="2" height="2" fill="#a09888"/><rect x="22" y="22" width="2" height="2" fill="#a09888"/><rect x="24" y="22" width="2" height="2" fill="#b87a45"/><rect x="0" y="24" width="2" height="2" fill="#a04a38"/><rect x="2" y="24" width="2" height="2" fill="#a09888"/><rect x="4" y="24" width="2" height="2" fill="#a89a88"/><rect x="6" y="24" width="2" height="2" fill="#8f8468"/><rect x="8" y="24" width="2" height="2" fill="#b87a45"/><rect x="10" y="24" width="2" height="2" fill="#8f8468"/><rect x="12" y="24" width="2" height="2" fill="#a04a38"/><rect x="14" y="24" width="2" height="2" fill="#9a5a3e"/><rect x="16" y="24" width="2" height="2" fill="#b87a45"/><rect x="18" y="24" width="2" height="2" fill="#6e5a48"/><rect x="20" y="24" width="2" height="2" fill="#7a6a58"/><rect x="22" y="24" width="2" height="2" fill="#a89a88"/><rect x="24" y="24" width="2" height="2" fill="#b87a45"/></svg></div>
<div class="a" style="left:525px;top:133px;width:36px;height:37px;background:#dae3e3;border-bottom:4px solid #bac6c3;border-radius:2px 2px 0 0"></div>
<div class="a" style="left:569px;top:133px;width:36px;height:37px;background:#dae3e3;border-bottom:4px solid #bac6c3;border-radius:2px 2px 0 0"></div>
<svg class="a" style="left:525px;top:133px" width="80" height="34" fill="none" stroke="#7f8c8d" stroke-width="1.9">
<path d="M8.6,16.6 L15,23 L27.2,10.8"/>
</svg>
<svg class="a" style="left:569px;top:133px" width="36" height="34" fill="none" stroke="#7f8c8d" stroke-width="1.9"><path d="M8,17 L27,17 M21,10.8 L27.2,17 L21,23.2"/></svg>
<div class="a" style="left:613px;top:133px;width:248px;height:36px;background:#fff;"></div>
<div class="t" style="left:623.6px;top:143.61px;font-size:13.45px;color:#7f8c8d;font-weight:bold;letter-spacing:0px;font-family:'Liberation Sans',sans-serif;">-- Select Board or Port --</div>
<div class="a" style="left:869px;top:133px;width:36px;height:37px;background:#dae3e3;border-bottom:4px solid #bac6c3;border-radius:2px 2px 0 0"></div>
<svg class="a" style="left:869px;top:133px" width="36" height="34" fill="#7f8c8d"><circle cx="11.5" cy="16.5" r="2"/><circle cx="18" cy="16.5" r="2"/><circle cx="24.5" cy="16.5" r="2"/></svg>
<div class="a" style="left:913px;top:133px;width:64px;height:37px;background:#dae3e3;border-bottom:4px solid #bac6c3;border-radius:2px 2px 0 0"></div>
<div class="t" style="left:921.5px;top:144.77px;font-size:11.5px;color:#59656a;font-weight:normal;letter-spacing:0.47px;font-family:'Liberation Sans',sans-serif;">SHARE</div>
<div class="a" style="left:525px;top:202px;width:134px;height:35px;background:#fff;"></div>
<div class="a" style="left:667px;top:202px;width:134px;height:35px;background:#dae3e3;"></div>
<div class="a" style="left:809px;top:202px;width:133px;height:35px;background:#dae3e3;"></div>
<div class="a" style="left:950px;top:202px;width:134px;height:35px;background:#dae3e3;"></div>
<div class="t" style="left:540.3px;top:214.53px;font-size:12.6px;color:#434f54;font-weight:normal;letter-spacing:0px;font-family:'Liberation Sans',sans-serif;width:111px;overflow:hidden;-webkit-mask-image:linear-gradient(to right,#000 80%,transparent 100%)">MKR1000Printer.ino</div>
<div class="t" style="left:681.8px;top:214.36px;font-size:12.8px;color:#434f54;font-weight:normal;letter-spacing:0px;font-family:'Liberation Sans',sans-serif;">div.h</div>
<div class="t" style="left:823.5px;top:214.36px;font-size:12.8px;color:#434f54;font-weight:normal;letter-spacing:0px;font-family:'Liberation Sans',sans-serif;">div2.h</div>
<div class="t" style="left:965.6px;top:214.36px;font-size:12.8px;color:#434f54;font-weight:normal;letter-spacing:0px;font-family:'Liberation Sans',sans-serif;">div3.h</div>
<div class="a" style="left:1092px;top:202px;width:36px;height:35px;background:#dae3e3;"></div>
<svg class="a" style="left:1092px;top:202px" width="36" height="35"><path d="M11.5,15 L25.5,15 L18.5,21.5 Z" fill="#95a5a6"/></svg>
<div class="a" style="left:1136px;top:202px;width:36px;height:35px;background:#dae3e3;"></div>
<svg class="a" style="left:1136px;top:202px" width="36" height="35" fill="#95a5a6"><rect x="10" y="10.8" width="2" height="2"/><rect x="10" y="17.8" width="2" height="2"/><rect x="10" y="24.8" width="2" height="2"/><rect x="14" y="10.8" width="12.4" height="2"/><rect x="14" y="17.8" width="12.4" height="2"/><rect x="14" y="24.8" width="12.4" height="2"/></svg>
<div class="a" style="left:525px;top:237px;width:647px;height:497px;background:#fff;"></div>
<div class="a" style="left:470px;top:568px;width:55px;height:17px;background:#dae3e3;"></div>
<svg class="a" style="left:1138px;top:260px" width="26" height="26" fill="none" stroke="#bcc6c4" stroke-width="2">
<path d="M4.2,8.6 L4.2,4 L8.8,4 M4.2,4 L9.6,9.4"/><path d="M17.6,4 L22.1,4 L22.1,8.6 M22.1,4 L16.7,9.4"/>
<path d="M4.2,17.4 L4.2,22 L8.8,22 M4.2,22 L9.6,16.6"/><path d="M22.1,17.4 L22.1,22 L17.6,22 M22.1,22 L16.7,16.6"/>
</svg>
<div class="a" style="left:1179px;top:237px;width:8px;height:238px;background:#7f8c8d;border-radius:4px"></div>
<div class="a" style="left:525px;top:741px;width:401px;height:8px;background:#7f8c8d;border-radius:4px"></div>
<div class="a" style="left:525px;top:237px;width:647px;height:497px;overflow:hidden">
<div class="code" style="top:10.30px"></div>
<div class="code" style="top:27.30px"><span style="color:#728e00">#include</span><span style="color:#434f54">&lt;WiFiSSLClient.h&gt;</span></div>
<div class="code" style="top:44.30px"><span style="color:#728e00">#include</span> <span style="color:#434f54">&lt;SPI.h&gt;</span></div>
<div class="code" style="top:61.30px"><span style="color:#728e00">#include</span> <span style="color:#434f54">&lt;ArduinoJson.h&gt;</span></div>
<div class="code" style="top:78.30px"><span style="color:#728e00">#include</span> <span style="color:#434f54">"Adafruit_Thermal.h"</span></div>
<div class="code" style="top:95.30px"><span style="color:#728e00">#include</span> <span style="color:#434f54">"HeaderNew.h"</span></div>
<div class="code" style="top:112.30px"><span style="color:#728e00">#include</span> <span style="color:#434f54">"HeaderClosed.h"</span></div>
<div class="code" style="top:129.30px"><span style="color:#728e00">#include</span> <span style="color:#434f54">"HeaderComment.h"</span></div>
<div class="code" style="top:146.30px"><span style="color:#728e00">#include</span> <span style="color:#434f54">"HeaderMerge.h"</span></div>
<div class="code" style="top:163.30px"><span style="color:#728e00">#include</span> <span style="color:#434f54">"HeaderPull.h"</span></div>
<div class="code" style="top:180.30px"><span style="color:#728e00">#include</span> <span style="color:#434f54">"footer.h"</span></div>
<div class="code" style="top:197.30px"><span style="color:#728e00">#include</span> <span style="color:#434f54">"div3.h"</span></div>
<div class="code" style="top:214.30px"><span style="color:#728e00">#include</span> <span style="color:#434f54">"div4.h"</span></div>
<div class="code" style="top:231.30px"></div>
<div class="code" style="top:248.30px"></div>
<div class="code" style="top:265.30px"><span style="color:#434f54">Adafruit_Thermal printer(</span><span style="color:#728e00">&amp;</span><span style="color:#d35400">Serial</span><span style="color:#6f7d80">1</span><span style="color:#434f54">);</span></div>
<div class="code" style="top:282.30px"><span style="color:#728e00">#define</span><span style="color:#434f54"> TX_PIN 1 </span><span style="color:#95a5a6">// Arduino transmit</span></div>
<div class="code" style="top:299.30px"><span style="color:#728e00">#define</span><span style="color:#434f54"> RX_PIN 5 </span><span style="color:#95a5a6">// Arduino receive</span></div>
<div class="code" style="top:316.30px"></div>
<div class="code" style="top:333.30px"></div>
<div class="code" style="top:350.30px"></div>
<div class="code" style="top:367.30px"></div>
<div class="code" style="top:384.30px"></div>
<div class="code" style="top:401.30px"><span style="color:#00979c">void</span> <span style="color:#5e6d03">setup</span><span style="color:#434f54">() {</span>     <span style="color:#95a5a6">///////////////////////////////////////////CONNECTING TO WIFI</span></div>
<div class="code" style="top:418.30px">  <span style="color:#d35400">Serial</span><span style="color:#6f7d80">1</span><span style="color:#434f54">.</span><span style="color:#d35400">begin</span><span style="color:#434f54">(9600);</span></div>
<div class="code" style="top:435.30px">  <span style="color:#d35400">Serial</span><span style="color:#434f54">.</span><span style="color:#d35400">begin</span><span style="color:#434f54">(9600);</span></div>
<div class="code" style="top:452.30px">  <span style="color:#434f54">printer.</span><span style="color:#d35400">begin</span><span style="color:#434f54">(200);</span>        <span style="color:#95a5a6">// Init printer (same regardless of serial type)</span></div>
<div class="code" style="top:469.30px"></div>
<div class="code" style="top:486.30px">  <span style="color:#434f54">printer.justify('L');</span></div>
<div class="code" style="top:503.30px"></div>
<div class="a" style="left:4px;top:331px;width:1px;height:17px;background:#dfe5e5"></div>
</div>
<div class="a" style="left:470px;top:237px;width:55px;height:512px;overflow:hidden">
<div class="ln" style="top:9.00px">1</div>
<div class="ln" style="top:26.00px">2</div>
<div class="ln" style="top:43.00px">3</div>
<div class="ln" style="top:60.00px">4</div>
<div class="ln" style="top:77.00px">5</div>
<div class="ln" style="top:94.00px">6</div>
<div class="ln" style="top:111.00px">7</div>
<div class="ln" style="top:128.00px">8</div>
<div class="ln" style="top:145.00px">9</div>
<div class="ln" style="top:162.00px">10</div>
<div class="ln" style="top:179.00px">11</div>
<div class="ln" style="top:196.00px">12</div>
<div class="ln" style="top:213.00px">13</div>
<div class="ln" style="top:230.00px">14</div>
<div class="ln" style="top:247.00px">15</div>
<div class="ln" style="top:264.00px">16</div>
<div class="ln" style="top:281.00px">17</div>
<div class="ln" style="top:298.00px">18</div>
<div class="ln" style="top:315.00px">19</div>
<div class="ln" style="top:332.00px">20</div>
<div class="ln" style="top:349.00px">21</div>
<div class="ln" style="top:366.00px">22</div>
<div class="ln" style="top:383.00px">23</div>
<div class="ln" style="top:400.00px">24</div>
<div class="ln" style="top:417.00px">25</div>
<div class="ln" style="top:434.00px">26</div>
<div class="ln" style="top:451.00px">27</div>
<div class="ln" style="top:468.00px">28</div>
<div class="ln" style="top:485.00px">29</div>
<div class="ln" style="top:502.00px">30</div>
</div>
<svg class="a" style="left:508px;top:641px" width="10" height="8"><path d="M2.8,1.2 L8.1,1.2 L5.45,6.2 Z" fill="#95a5a6"/></svg>
</body></html>
